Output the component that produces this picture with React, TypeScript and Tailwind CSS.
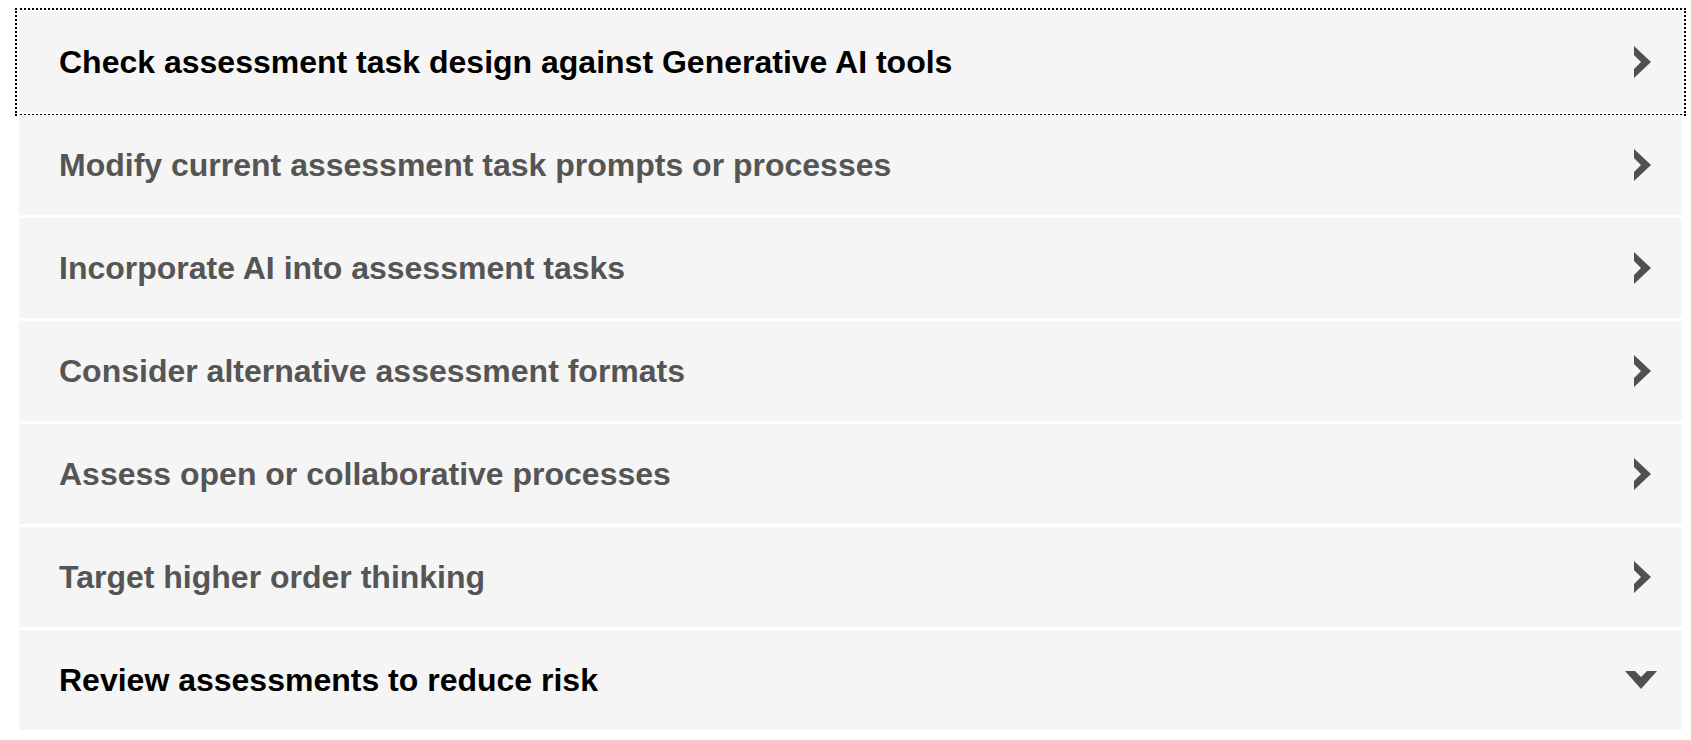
import React from "react";

const items: { title: string; open?: boolean; active?: boolean }[] = [
  { title: "Check assessment task design against Generative AI tools", active: true },
  { title: "Modify current assessment task prompts or processes" },
  { title: "Incorporate AI into assessment tasks" },
  { title: "Consider alternative assessment formats" },
  { title: "Assess open or collaborative processes" },
  { title: "Target higher order thinking" },
  { title: "Review assessments to reduce risk", open: true },
];

function ChevronRight() {
  return (
    <svg width="18" height="32" viewBox="0 0 18 32" className="block">
      <polygon points="0,0 17,16 0,32 0,23 7,16 0,9" fill="#505050" />
    </svg>
  );
}

function ChevronDown() {
  return (
    <svg width="32" height="18" viewBox="0 0 32 18" className="block">
      <polygon points="0,0 10,0 16,6 22,0 32,0 16,18" fill="#505050" />
    </svg>
  );
}

export default function App() {
  return (
    <div
      className="w-[1691px] h-[740px] bg-white pt-[12px] pl-[19px] pr-[9px]"
      style={{ fontFamily: '"Liberation Sans", Arial, Helvetica, sans-serif' }}
    >
      <div className="flex flex-col gap-[3px]">
        {items.map((it, i) => (
          <div
            key={i}
            className={
              "flex items-center justify-between h-[100px] bg-[#f5f5f5] pl-[40px] " +
              (i === 0 ? "outline-2 outline-dotted outline-black outline-offset-2 " : "") +
              (it.open ? "pr-[25px]" : "pr-[30px]")
            }
          >
            <span
              className={
                "text-[32px] font-bold leading-none " +
                (it.active || it.open ? "text-black" : "text-[#555555]")
              }
            >
              {it.title}
            </span>
            {it.open ? <ChevronDown /> : <ChevronRight />}
          </div>
        ))}
      </div>
    </div>
  );
}
